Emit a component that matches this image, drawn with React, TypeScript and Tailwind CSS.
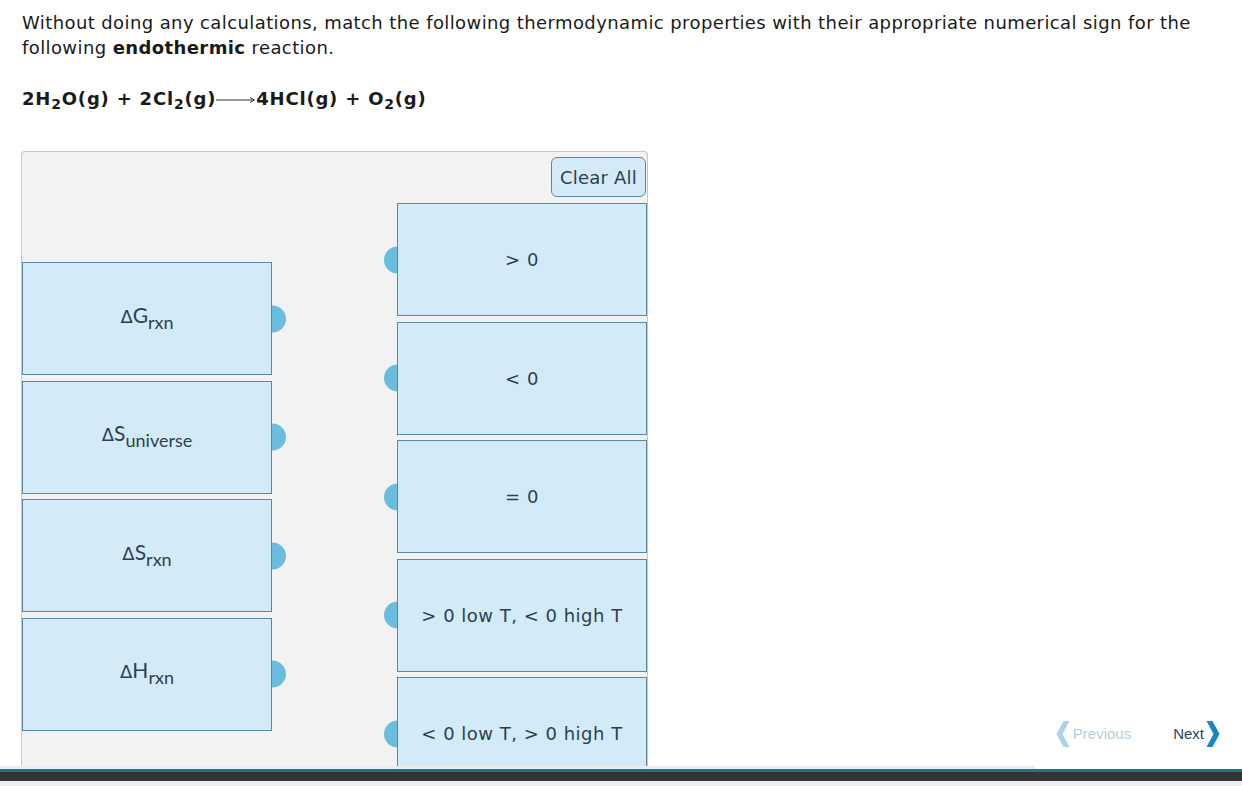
import React from "react";

const dv = "font-['DejaVu_Sans',Verdana,sans-serif]";

function Dot({ side }: { side: "left" | "right" }) {
  return (
    <span
      className={
        "absolute top-1/2 -translate-y-1/2 w-[27px] h-[27px] rounded-full bg-[#6bbde0] " +
        (side === "right" ? "right-[-14px]" : "left-[-13px]")
      }
    />
  );
}

function TermBox({ sym, sub }: { sym: string; sub: string }) {
  return (
    <div className="relative h-[113px]">
      <Dot side="right" />
      <div className="relative h-full border border-[#5b87a0] bg-[#d3eaf8] flex items-center justify-center font-['Lato',sans-serif] text-[#2d3f4f]">
        <span className="text-[21px] leading-none relative -top-[4px]">
          <span className="text-[18px] font-['DejaVu_Sans',sans-serif]">Δ</span>
          {sym}
          <sub className="text-[18px] align-baseline relative top-[6px]">{sub}</sub>
        </span>
      </div>
    </div>
  );
}

function SignBox({ label }: { label: string }) {
  return (
    <div className="relative h-[113px]">
      <Dot side="left" />
      <div className={"relative h-full border border-[#5b87a0] bg-[#d3eaf8] flex items-center justify-center text-[18px] tracking-[0.5px] text-[#2d3f4f] " + dv}>
        {label}
      </div>
    </div>
  );
}

function Chevron({ dir, color }: { dir: "left" | "right"; color: string }) {
  const pts = dir === "left" ? "13,0 6,13 13,26 7,26 0,13 7,0" : "0,0 7,13 0,26 6,26 13,13 6,0";
  return (
    <svg width="14" height="26" viewBox="0 0 13 26" className="block">
      <polygon points={pts} fill={color} />
    </svg>
  );
}

function Sub({ children }: { children: React.ReactNode }) {
  return <sub className="text-[14px] align-baseline relative top-[4px]">{children}</sub>;
}

export default function App() {
  const terms: [string, string][] = [
    ["G", "rxn"],
    ["S", "universe"],
    ["S", "rxn"],
    ["H", "rxn"],
  ];
  const signs = ["> 0", "< 0", "= 0", "> 0 low T, < 0 high T", "< 0 low T, > 0 high T"];

  return (
    <div className="w-[1242px] h-[786px] bg-white flex flex-col overflow-hidden">
      <div className="h-[766px] flex flex-col overflow-hidden">
        <div className={"pl-[22px] pr-[40px] pt-[10px] text-[18px] leading-[25px] text-[#1a1a1a] " + dv}>
          <p className="tracking-[0.4px]">
            Without doing any calculations, match the following thermodynamic properties with their appropriate numerical sign for the following <b>endothermic</b> reaction.
          </p>
          <p className="mt-[26px] font-bold tracking-[0.8px] flex items-baseline">
            <span>
              2H<Sub>2</Sub>O(g) + 2Cl<Sub>2</Sub>(g)
            </span>
            <svg width="40" height="8" viewBox="0 0 40 8" className="self-center relative top-[1px]">
              <line x1="0" y1="4" x2="38" y2="4" stroke="#333" strokeWidth="1" />
              <polyline points="34,1.5 38.5,4 34,6.5" fill="none" stroke="#333" strokeWidth="1" />
            </svg>
            <span>
              4HCl(g) + O<Sub>2</Sub>(g)
            </span>
          </p>
        </div>

        <div className="flex-1 flex min-h-0 mt-[40px]">
          <div className="ml-[21px] w-[627px] shrink-0 border-l border-t border-r border-[#c8c8c8] rounded-t-[4px] bg-[#f2f2f2]">
            <div className="flex justify-end pt-[5px] pr-[1px]">
              <button className={"h-[40px] px-[8px] rounded-[6px] border border-[#5b87a0] bg-[#d3eaf8] text-[18px] tracking-[0.2px] text-[#2d3f4f] " + dv}>
                Clear All
              </button>
            </div>
            <div className="flex justify-between mt-[6px]">
              <div className="w-[250px] mt-[59px] flex flex-col gap-[5.5px]">
                {terms.map(([s, sub], i) => (
                  <TermBox key={i} sym={s} sub={sub} />
                ))}
              </div>
              <div className="w-[250px] flex flex-col gap-[5.5px]">
                {signs.map((s, i) => (
                  <SignBox key={i} label={s} />
                ))}
              </div>
            </div>
          </div>
          <div className="flex-1 flex justify-end items-end pb-[19px] pr-[22px] font-['Liberation_Sans',Arial,sans-serif] text-[15px]">
            <div className="flex items-center gap-[3px] text-[#b9ccd6]">
              <Chevron dir="left" color="#a9d3ea" />
              <span>Previous</span>
            </div>
            <div className="flex items-center gap-[2px] ml-[42px] text-[#23465e]">
              <span>Next</span>
              <Chevron dir="right" color="#1b84c4" />
            </div>
          </div>
        </div>
      </div>
      <div className="h-[3px] w-[1035px] bg-[#ececec]" />
      <div className="h-[3px] bg-[#1e6f9e]" />
      <div className="h-[9px] bg-[#333333]" />
      <div className="flex-1 bg-[#eef0f0]" />
    </div>
  );
}
